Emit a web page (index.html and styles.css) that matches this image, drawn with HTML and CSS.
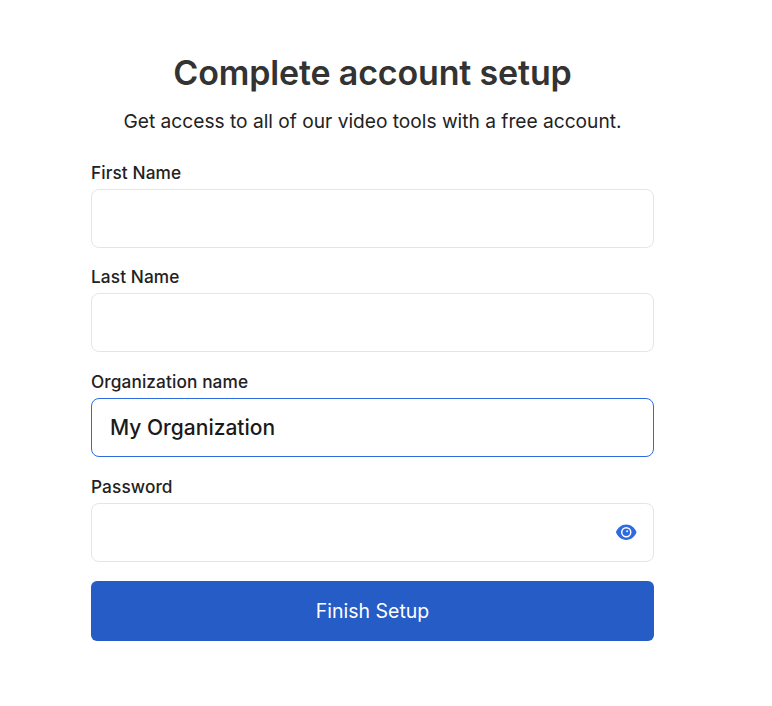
FILE: index.html
```html
<!DOCTYPE html>
<html lang="en">
<head>
    <meta charset="UTF-8" />
    <title>Complete account setup</title>
    <link rel="stylesheet" href="styles.css">
</head>
<body>
    <main class="setup">
        <h1 class="setup-title">Complete account setup</h1>
        <p class="setup-subtitle">Get access to all of our video tools with a free account.</p>
        <form class="setup-form">
            <div class="input-group">
                <label for="firstName">First Name</label>
                <input type="text" id="firstName" />
            </div>
            <div class="input-group">
                <label for="lastName">Last Name</label>
                <input type="text" id="lastName" />
            </div>
            <div class="input-group">
                <label for="orgName">Organization name</label>
                <input type="text" id="orgName" class="is-focused" value="My Organization" />
            </div>
            <div class="input-group">
                <label for="password">Password</label>
                <div class="password-wrap">
                    <input type="password" id="password" />
                    <svg class="eye-icon" viewBox="0 0 24 24" aria-hidden="true">
                        <path fill="#2e6ae0" fill-rule="evenodd" d="M12 3.8C7 3.8 2.73 7.3 1 12c1.73 4.7 6 8.2 11 8.2s9.27-3.5 11-8.2c-1.73-4.7-6-8.2-11-8.2zM12 17.6a5.6 5.6 0 1 1 0-11.2 5.6 5.6 0 0 1 0 11.2z"/>
                        <circle cx="12" cy="12" r="4" fill="#2e6ae0"/>
                        <circle cx="12.9" cy="10.9" r="1" fill="#fff"/>
                    </svg>
                </div>
            </div>
            <button type="button" class="finish-btn">Finish Setup</button>
        </form>
    </main>
</body>
</html>
```

FILE: styles.css
```css
body {
    margin: 0;
    font-family: Inter, "Liberation Sans", sans-serif;
    background: #fff;
    color: #1f1f1f;
}

.setup {
    width: 563px;
    margin-left: 91px;
    padding-top: 51px;
}

.setup-title {
    margin: 0;
    font-size: 34px;
    line-height: 44px;
    font-weight: 600;
    letter-spacing: -0.16px;
    text-align: center;
    color: #333;
}

.setup-subtitle {
    margin: 14px 0 0;
    font-size: 19.15px;
    line-height: 24px;
    font-weight: 400;
    text-align: center;
    color: #222;
}

.setup-form {
    margin-top: 28px;
}

.input-group {
    margin-bottom: 18px;
}

.input-group:first-child {
    margin-bottom: 17px;
}

.input-group:last-of-type {
    margin-bottom: 0;
}

.input-group label {
    display: block;
    margin-bottom: 4px;
    font-size: 17.25px;
    line-height: 24px;
    font-weight: 500;
    letter-spacing: 0.1px;
    color: #222;
}

.input-group input {
    display: block;
    box-sizing: border-box;
    width: 100%;
    height: 59px;
    padding: 0 18px;
    border: 1px solid #e4e4ec;
    border-radius: 8px;
    background: #fff;
    font-family: inherit;
    font-size: 21px;
    font-weight: 500;
    color: #1a1a1a;
    outline: none;
}

.input-group input.is-focused {
    border-color: #2e6ae0;
}

.password-wrap {
    position: relative;
}

.eye-icon {
    position: absolute;
    right: 17px;
    top: 18px;
    width: 22.5px;
    height: 22.5px;
}

.finish-btn {
    display: block;
    width: 100%;
    height: 60px;
    margin-top: 19px;
    border: none;
    border-radius: 6px;
    background: #255cc6;
    color: #fff;
    font-family: inherit;
    font-size: 19.5px;
    font-weight: 400;
    cursor: pointer;
}
```
